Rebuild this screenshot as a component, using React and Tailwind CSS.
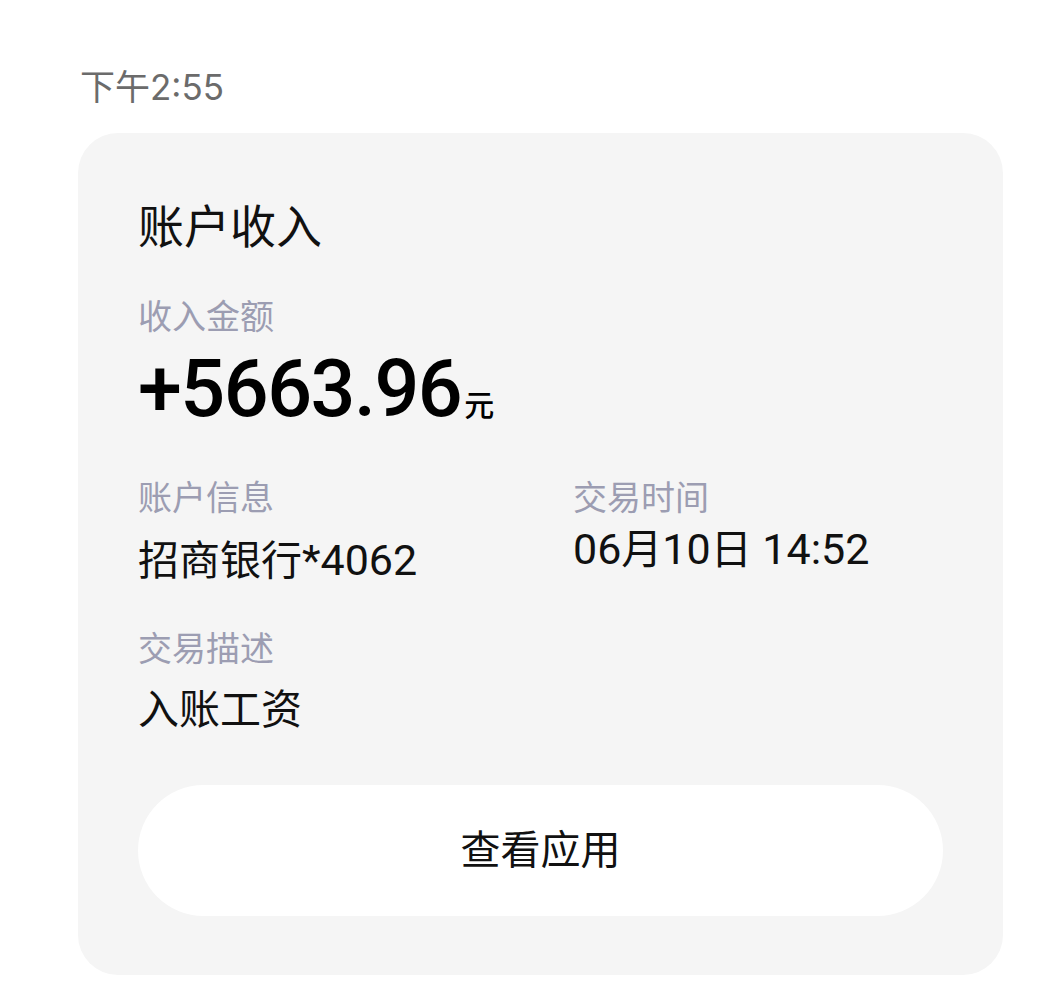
const font = { fontFamily: 'Roboto, "Noto Sans CJK SC", sans-serif' };

const Label = ({ children, className = "" }) => (
  <div className={`text-[34px] leading-[44px] text-[#9c9db2] ${className}`}>{children}</div>
);

const Value = ({ children, className = "" }) => (
  <div className={`text-[41px] leading-[50px] text-[#111] ${className}`}>{children}</div>
);

const Num = ({ children }) => <span className="text-[43px] leading-none">{children}</span>;

export default function App() {
  return (
    <div className="min-h-screen bg-white pl-[78px] pr-[52px] pt-[63px]" style={font}>
      <div
        className="pl-[2px] text-[35px] leading-[48px] text-[#6b6b6b]"
        style={{ fontFamily: 'Inter, "Noto Sans CJK SC", sans-serif' }}
      >
        下午2:55
      </div>

      <div className="mt-[22px] rounded-[40px] bg-[#f5f5f5] px-[60px] pt-[64px] pb-[59px]">
        <div className="text-[46px] leading-[60px] text-[#111]">账户收入</div>

        <Label className="mt-[38px]">收入金额</Label>
        <div className="mt-[5px] h-[90px] leading-[90px] text-black">
          <span className="text-[79px] font-medium tracking-[-1.5px]">+5663.96</span>
          <span className="ml-[3px] text-[30px] font-medium leading-none">元</span>
        </div>

        <div className="mt-[42px] grid grid-cols-[435px_1fr]">
          <div>
            <Label>账户信息</Label>
            <Value className="mt-[16px]">
              招商银行<Num>*4062</Num>
            </Value>
          </div>
          <div>
            <Label>交易时间</Label>
            <Value className="mt-[5px]">
              <Num>06</Num>月<Num>10</Num>日<Num> 14:52</Num>
            </Value>
          </div>
        </div>

        <Label className="mt-[41px]">交易描述</Label>
        <Value className="mt-[14px]">入账工资</Value>

        <button className="mt-[50px] flex h-[131px] w-full items-center justify-center rounded-full bg-white text-[40px] text-[#111]">
          查看应用
        </button>
      </div>
    </div>
  );
}
